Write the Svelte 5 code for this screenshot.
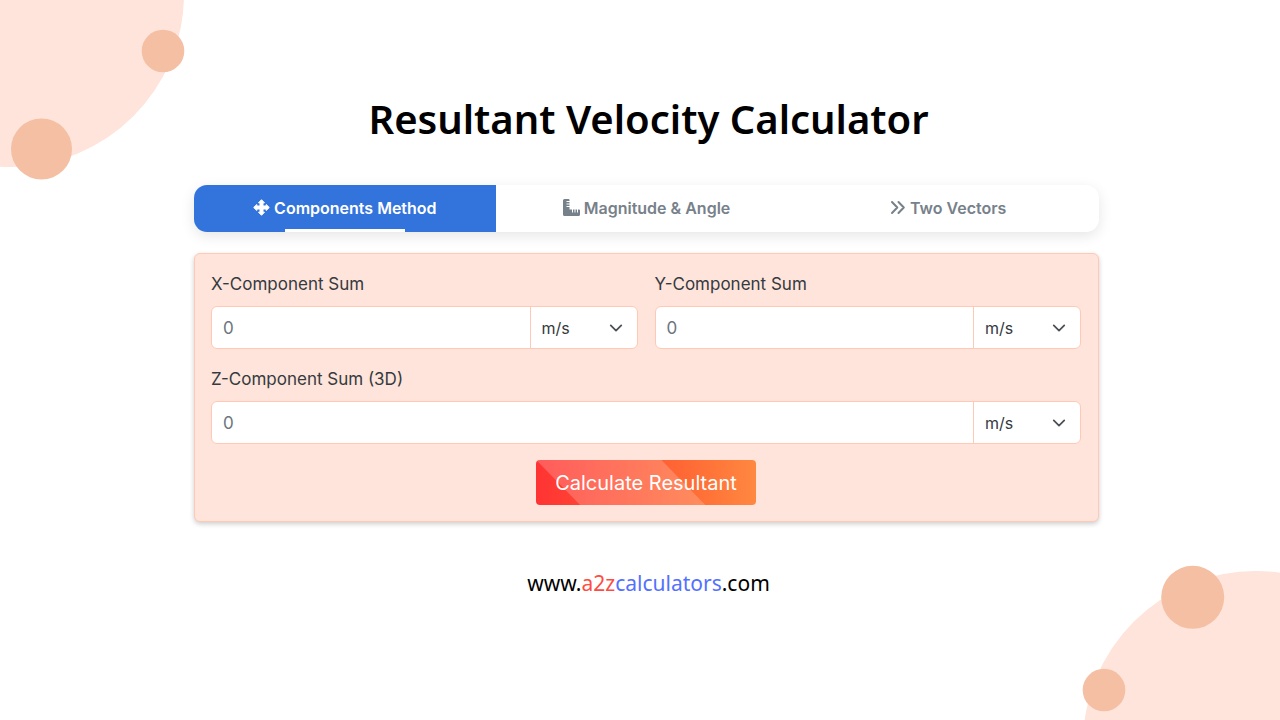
<script>
    const tabs = [
        { id: "components", label: "Components Method" },
        { id: "magnitude", label: "Magnitude & Angle" },
        { id: "vectors", label: "Two Vectors" }
    ];
    const fields = [
        { id: "x-sum", label: "X-Component Sum" },
        { id: "y-sum", label: "Y-Component Sum" },
        { id: "z-sum", label: "Z-Component Sum (3D)", wide: true }
    ];
    const units = ["m/s", "km/h", "ft/s", "mph"];

    let active = $state("components");
</script>

<svelte:head>
    <title>Resultant Velocity Calculator</title>
</svelte:head>

<div class="page">
    <svg class="corner top" width="190" height="190" viewBox="0 0 190 190" aria-hidden="true">
        <circle class="pale" cx="11" cy="-6" r="173" />
        <circle class="dot" cx="163" cy="51" r="21.3" />
        <circle class="dot" cx="41.5" cy="149" r="30.5" />
    </svg>
    <svg class="corner bottom" width="200" height="160" viewBox="1080 560 200 160" aria-hidden="true">
        <circle class="pale" cx="1256" cy="744" r="173" />
        <circle class="dot" cx="1192.7" cy="597.3" r="31.5" />
        <circle class="dot" cx="1104" cy="690" r="21.3" />
    </svg>

    <main>
        <h1>Resultant Velocity Calculator</h1>

        <div class="tabs" role="tablist">
            {#each tabs as tab}
                <button type="button" role="tab" class="tab" class:active={active === tab.id} aria-selected={active === tab.id} onclick={() => active = tab.id}>
                    {#if tab.id === "components"}
                        <svg width="17" height="17" viewBox="0 0 17 17" aria-hidden="true">
                            <path fill="currentColor" stroke="currentColor" stroke-width="1" stroke-linejoin="round" d="M8.5 .7 11.5 3.8H10V7h3.200V5.500L16.300 8.500 13.200 11.500V10H10v3.200h1.500L8.500 16.300 5.500 13.200H7V10H3.800v1.500L.7 8.500 3.800 5.500V7H7V3.800H5.500z" />
                        </svg>
                    {:else if tab.id === "magnitude"}
                        <svg width="17" height="17" viewBox="0 0 17 17" aria-hidden="true">
                            <path fill="currentColor" d="M1.5 0H5.5Q6.500 0 6.500 1V2H3.500V3H6.500V4.500H3.500V5.500H6.500V7H3.500V8H6.500V10.500H9V13.500H10V10.500H11.500V13.500H12.500V10.500H14V13.500H15V10.500H16Q17 10.500 17 11.500V15.500Q17 17 15.500 17H1.500Q0 17 0 15.500V1.500Q0 0 1.500 0z" />
                        </svg>
                    {:else}
                        <svg width="16" height="17" viewBox="0 0 16 17" aria-hidden="true">
                            <path fill="none" stroke="currentColor" stroke-width="2" stroke-linecap="round" stroke-linejoin="round" d="M2 3l5.300 5.500L2 14M8.500 3l5.300 5.500L8.500 14" />
                        </svg>
                    {/if}
                    <span>{tab.label}</span>
                </button>
            {/each}
        </div>

        <form class="panel" onsubmit={(e) => e.preventDefault()}>
            {#each fields as field}
                <div class="field" class:wide={field.wide}>
                    <label for={field.id}>{field.label}</label>
                    <div class="group">
                        <input id={field.id} type="text" inputmode="decimal" placeholder="0">
                        <div class="unit">
                            <select aria-label="{field.label} unit">
                                {#each units as unit}
                                    <option>{unit}</option>
                                {/each}
                            </select>
                            <svg width="14" height="14" viewBox="0 0 16 16" aria-hidden="true">
                                <path fill="none" stroke="#4a5056" stroke-width="2" stroke-linecap="round" stroke-linejoin="round" d="m2 5 6 6 6-6" />
                            </svg>
                        </div>
                    </div>
                </div>
            {/each}
            <button type="submit" class="calculate"><span>Calculate Resultant</span></button>
        </form>

        <p class="site">www.<span class="red">a2z</span><span class="blue">calculators</span>.com</p>
    </main>
</div>

<style>
    :global(body) {
        margin: 0;
        background: #fff;
    }

    .page {
        position: relative;
        min-height: 100vh;
        overflow: hidden;
        box-sizing: border-box;
        padding: 95px 24px 0 37px;
        font-family: Inter, "Liberation Sans", sans-serif;
        font-size: 17px;
        color: #343a40;
    }

    .corner {position: absolute;}
    .corner.top {top: 0; left: 0;}
    .corner.bottom {right: 0; bottom: 0;}
    .pale {fill: #fee4da;}
    .dot {fill: #f5bfa4;}

    main {
        position: relative;
        max-width: 905px;
        margin: 0 auto;
    }

    h1 {
        margin: 0 0 42px;
        padding-left: 4px;
        font: 600 40px/48px "Noto Sans", "Open Sans", sans-serif;
        text-align: center;
        color: #000;
    }

    .tabs {
        display: flex;
        height: 47px;
        margin-bottom: 21px;
        border-radius: 13px;
        overflow: hidden;
        background: #fff;
        box-shadow: 0 4px 14px rgba(0, 0, 0, .1);
    }
    .tab {
        position: relative;
        flex: 1;
        display: flex;
        align-items: center;
        justify-content: center;
        gap: 4px;
        padding: 0 0 2px;
        border: 0;
        background: none;
        font: inherit;
        font-size: 16px;
        font-weight: 600;
        color: #77818a;
        cursor: pointer;
    }
    .tab.active {
        background: #3273dc;
        color: #fff;
    }
    .tab.active::after {
        content: "";
        position: absolute;
        left: 30%;
        bottom: 0;
        width: 40%;
        height: 3px;
        background: #fff;
    }

    .panel {
        display: grid;
        grid-template-columns: 1fr 1fr;
        gap: 16px 17px;
        padding: 16px 17px 16px 16px;
        border: 1px solid #ffc9b5;
        border-radius: 6px;
        background: #fee4da;
        box-shadow: 0 2px 5px rgba(0, 0, 0, .2);
    }
    .wide {grid-column: 1 / -1;}

    label {
        display: block;
        margin-bottom: 7px;
        line-height: 29px;
    }
    .group {
        display: flex;
        height: 43px;
        box-sizing: border-box;
        border: 1px solid #ffc9b5;
        border-radius: 6px;
        overflow: hidden;
        background: #fff;
    }
    input, select {
        box-sizing: border-box;
        height: 100%;
        padding: 0 11px;
        border: 0;
        background: none;
        font: inherit;
        color: #343a40;
    }
    input {
        flex: 1;
        min-width: 0;
    }
    input::placeholder {
        color: #6c757d;
        opacity: 1;
    }
    .unit {
        position: relative;
        width: 106px;
        border-left: 1px solid #ffc9b5;
    }
    select {
        width: 100%;
        font-size: 16px;
        appearance: none;
    }
    .unit svg {
        position: absolute;
        top: 14px;
        right: 14px;
        pointer-events: none;
    }

    .calculate {
        position: relative;
        grid-column: 1 / -1;
        justify-self: center;
        height: 45px;
        padding: 0 19px;
        border: 0;
        border-radius: 4px;
        overflow: hidden;
        background: linear-gradient(90deg, #f33, #ff6b35 70%, #ff8840);
        font: inherit;
        font-size: 20px;
        color: #fff;
        cursor: pointer;
    }
    .calculate::before {
        content: "";
        position: absolute;
        inset: 0;
        background: rgba(255, 255, 255, .2);
        clip-path: polygon(0 0, 57% 0, 77% 100%, 20% 100%);
    }
    .calculate span {position: relative;}

    .site {
        margin: 46px 0 0;
        padding-left: 4px;
        font: 21px/30px "Noto Sans", "Open Sans", sans-serif;
        text-align: center;
        color: #000;
    }
    .red {color: #ff4b42;}
    .blue {color: #5271ff;}
</style>
